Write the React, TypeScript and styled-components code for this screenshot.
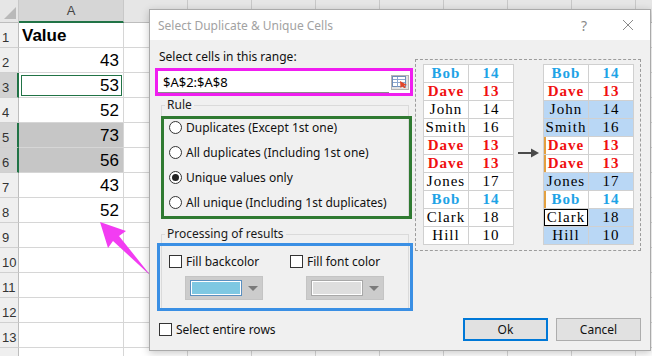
import React from 'react';
import styled, { createGlobalStyle } from 'styled-components';

const GlobalStyle = createGlobalStyle`
  html, body {
    margin: 0;
    padding: 0;
    background: #fff;
  }
  body {
    width: 652px;
    height: 356px;
    overflow: hidden;
    position: relative;
    font-family: "Liberation Sans", Arial, sans-serif;
  }
`;

const VALUES: (string | number)[] = ['Value', 43, 53, 52, 73, 56, 43, 52];
const SELECTED_ROWS = [3, 5, 6];
const GRAY_ROWS = [5, 6];
const EXTRA_COLS = 9;
const ROW_COUNT = 14;
const LABELED_ROWS = 13;

type Person = { name: string; age: string; tone?: 'blue' | 'red' };

const PEOPLE: Person[] = [
  { name: 'Bob', age: '14', tone: 'blue' },
  { name: 'Dave', age: '13', tone: 'red' },
  { name: 'John', age: '14' },
  { name: 'Smith', age: '16' },
  { name: 'Dave', age: '13', tone: 'red' },
  { name: 'Dave', age: '13', tone: 'red' },
  { name: 'Jones', age: '17' },
  { name: 'Bob', age: '14', tone: 'blue' },
  { name: 'Clark', age: '18' },
  { name: 'Hill', age: '10' },
];

// rows picked out in the "after" table
const PICKED = [2, 3, 6, 8, 9];
const MARKED = [4, 5, 7];

export default function App() {
  return (
    <>
      <GlobalStyle />
      <Sheet>
        <Corner>
          <svg width="12" height="12" viewBox="0 0 12 12">
            <polygon points="12,0 12,12 0,12" fill="#b9b9b9" />
          </svg>
        </Corner>
        <ColHead $selected>A</ColHead>
        {Array.from({ length: EXTRA_COLS }).map((_, i) => (
          <ColHead key={i} />
        ))}
        {Array.from({ length: ROW_COUNT }).map((_, r) => {
          const row = r + 1;
          const value = VALUES[r];
          return (
            <React.Fragment key={row}>
              <RowHead $selected={SELECTED_ROWS.includes(row)}>
                {row <= LABELED_ROWS ? row : ''}
              </RowHead>
              <Cell
                $bold={row === 1}
                $gray={GRAY_ROWS.includes(row)}
                $active={row === 3}
              >
                {value}
              </Cell>
              {Array.from({ length: EXTRA_COLS }).map((_, c) => (
                <Cell key={c} />
              ))}
            </React.Fragment>
          );
        })}
      </Sheet>

      <Pointer width="160" height="290" viewBox="0 0 160 290">
        <polygon
          points="100,222 126,231 119,236 151,276 113,241 108,248"
          fill="#f23cf2"
        />
      </Pointer>

      <Dialog>
        <TitleBar>
          <Title>Select Duplicate &amp; Unique Cells</Title>
          <TitleButton>?</TitleButton>
          <TitleButton>
            <svg width="12" height="12" viewBox="0 0 12 12">
              <path d="M1 1L11 11M11 1L1 11" stroke="#8a8a8a" strokeWidth="1" />
            </svg>
          </TitleButton>
        </TitleBar>

        <Body>
          <Main>
            <LeftCol>
              <FieldLabel>Select cells in this range:</FieldLabel>
              <RangeBox>
                <RangeInput>$A$2:$A$8</RangeInput>
                <PickButton>
                  <svg width="16" height="12" viewBox="0 0 16 12">
                    <rect x="0.5" y="0.5" width="13" height="10" fill="#fff" stroke="#6f8db8" />
                    <path d="M1 3.5H13M1 6.5H13M5.5 1V10.5" stroke="#8ca8cf" />
                    <path d="M8 5L15 9L12 9.8L14 12H12L10.5 10.5L8.5 12Z" fill="#e2452a" />
                  </svg>
                </PickButton>
              </RangeBox>

              <Group $mt={1}>
                <Legend>Rule</Legend>
                <Highlight $color="#2f7a31" $mt={3} $ml={-1} $w={251}>
                  <RadioList>
                    <Option>
                      <Radio />
                      Duplicates (Except 1st one)
                    </Option>
                    <Option>
                      <Radio />
                      All duplicates (Including 1st one)
                    </Option>
                    <Option>
                      <Radio $checked />
                      Unique values only
                    </Option>
                    <Option>
                      <Radio />
                      All unique (Including 1st duplicates)
                    </Option>
                  </RadioList>
                </Highlight>
              </Group>

              <Group $mt={7}>
                <Legend>Processing of results</Legend>
                <Highlight $color="#3a8fe4" $mt={1} $ml={-5} $w={256}>
                  <ResultGrid>
                    <Choice>
                      <Option>
                        <Check />
                        Fill backcolor
                      </Option>
                      <Picker>
                        <Swatch $color="#7ec8e2" $edge="#5a8fc0" />
                        <Caret />
                      </Picker>
                    </Choice>
                    <Choice>
                      <Option>
                        <Check />
                        Fill font color
                      </Option>
                      <Picker>
                        <Swatch $color="#dedede" $edge="#a8a8a8" />
                        <Caret />
                      </Picker>
                    </Choice>
                  </ResultGrid>
                </Highlight>
              </Group>
            </LeftCol>

            <Preview>
              <MiniTable>
                {PEOPLE.map((p, i) => (
                  <React.Fragment key={i}>
                    <MiniCell $tone={p.tone}>{p.name}</MiniCell>
                    <MiniCell $tone={p.tone}>{p.age}</MiniCell>
                  </React.Fragment>
                ))}
              </MiniTable>
              <ArrowSlot>
                <svg width="22" height="10" viewBox="0 0 22 10">
                  <path d="M0 5H15" stroke="#4a4a4a" strokeWidth="2" />
                  <polygon points="13,0.5 21,5 13,9.5" fill="#4a4a4a" />
                </svg>
              </ArrowSlot>
              <MiniTable>
                {PEOPLE.map((p, i) => (
                  <React.Fragment key={i}>
                    <MiniCell
                      $tone={p.tone}
                      $picked={PICKED.includes(i) && i !== 8}
                      $marked={MARKED.includes(i)}
                      $boxed={i === 8}
                    >
                      {p.name}
                    </MiniCell>
                    <MiniCell $tone={p.tone} $picked={PICKED.includes(i)}>
                      {p.age}
                    </MiniCell>
                  </React.Fragment>
                ))}
              </MiniTable>
            </Preview>
          </Main>

          <Footer>
            <Option>
              <Check />
              Select entire rows
            </Option>
            <Buttons>
              <Button $primary>Ok</Button>
              <Button>Cancel</Button>
            </Buttons>
          </Footer>
        </Body>
      </Dialog>
    </>
  );
}

/* ---------- spreadsheet behind the dialog ---------- */

const Sheet = styled.div`
  display: grid;
  grid-template-columns: 19px 105px repeat(${EXTRA_COLS}, 64px);
  grid-template-rows: 23px repeat(${ROW_COUNT}, 25px);
  width: 652px;
  height: 356px;
  overflow: hidden;
`;

const Corner = styled.div`
  background: #e6e6e6;
  border-right: 1px solid #c8c8c8;
  border-bottom: 1px solid #bdbdbd;
  box-sizing: border-box;
  display: flex;
  align-items: flex-end;
  justify-content: flex-end;
  padding: 0 2px 3px 0;
`;

const ColHead = styled.div<{ $selected?: boolean }>`
  box-sizing: border-box;
  background: ${(p) => (p.$selected ? '#d6d6d6' : '#e6e6e6')};
  border-right: 1px solid #c8c8c8;
  border-bottom: ${(p) => (p.$selected ? '2px solid #217346' : '1px solid #bdbdbd')};
  color: #444;
  font-size: 13px;
  display: flex;
  align-items: center;
  justify-content: center;
`;

const RowHead = styled.div<{ $selected?: boolean }>`
  box-sizing: border-box;
  background: ${(p) => (p.$selected ? '#d2d2d2' : '#efefef')};
  border-bottom: 1px solid #d0d0d0;
  border-right: ${(p) => (p.$selected ? '2px solid #217346' : '1px solid #bdbdbd')};
  color: #333;
  font-size: 13px;
  padding: 4px 0 0 2px;
  display: flex;
  align-items: center;
`;

const Cell = styled.div<{ $bold?: boolean; $gray?: boolean; $active?: boolean }>`
  box-sizing: border-box;
  border-right: 1px solid #d6d6d6;
  border-bottom: 1px solid #d6d6d6;
  background: ${(p) => (p.$gray ? '#c6c6c6' : '#fff')};
  color: #000;
  font-size: 17px;
  font-weight: ${(p) => (p.$bold ? 700 : 400)};
  display: flex;
  align-items: center;
  justify-content: ${(p) => (p.$bold ? 'flex-start' : 'flex-end')};
  padding: 2px 4px 0 3px;
  outline: ${(p) => (p.$active ? '1px solid #217346' : 'none')};
  outline-offset: -3px;
`;

const Pointer = styled.svg`
  position: absolute;
  left: 0;
  top: 0;
`;

/* ---------- dialog ---------- */

const Dialog = styled.div`
  position: absolute;
  left: 149px;
  top: 9px;
  width: 502px;
  height: 342px;
  box-sizing: border-box;
  border: 1px solid #aaaaaa;
  background: #f0f0f0;
  box-shadow: 0 2px 8px rgba(0, 0, 0, 0.22);
  display: flex;
  flex-direction: column;
  font-family: "Noto Sans", "Open Sans", sans-serif;
  font-size: 12px;
  color: #111;
`;

const TitleBar = styled.div`
  height: 30px;
  background: #fff;
  display: flex;
  align-items: center;
  padding-left: 8px;
`;

const Title = styled.div`
  flex: 1;
  color: #a2a2a2;
  font-size: 12px;
`;

const TitleButton = styled.div`
  width: 44px;
  height: 30px;
  display: flex;
  align-items: center;
  justify-content: center;
  color: #8a8a8a;
  font-size: 14px;
`;

const Body = styled.div`
  flex: 1;
  display: flex;
  flex-direction: column;
  padding: 9px 8px 8px 5px;
`;

const Main = styled.div`
  display: grid;
  grid-template-columns: 258px 226px;
  column-gap: 2px;
  align-items: start;
`;

const LeftCol = styled.div`
  display: flex;
  flex-direction: column;
`;

const FieldLabel = styled.div`
  line-height: 16px;
  padding-left: 4px;
`;

const RangeBox = styled.div`
  margin-top: 3px;
  height: 28px;
  box-sizing: border-box;
  border: 3px solid #f01df0;
  background: #fff;
  display: flex;
  align-items: center;
  padding-right: 1px;
`;

const RangeInput = styled.div`
  flex: 1;
  align-self: stretch;
  display: flex;
  align-items: center;
  padding-left: 5px;
  font-size: 13px;
  color: #000;
  border-bottom: 1px solid #8a8a8a;
`;

const PickButton = styled.div`
  width: 18px;
  height: 15px;
  margin-left: 2px;
  box-sizing: border-box;
  background: #e3e3e3;
  border: 1px solid #b4b4b4;
  display: flex;
  align-items: center;
  justify-content: center;
`;

const Group = styled.fieldset<{ $mt: number }>`
  margin: ${(p) => p.$mt}px 0 0 6px;
  width: 248px;
  box-sizing: border-box;
  border: 1px solid #dadada;
  padding: 0;
  min-width: 0;
`;

const Legend = styled.legend`
  margin-left: 3px;
  padding: 0 2px;
  line-height: 16px;
  font-size: 12px;
  color: #1a1a1a;
`;

const Highlight = styled.div<{ $color: string; $mt: number; $ml: number; $w: number }>`
  box-sizing: border-box;
  width: ${(p) => p.$w}px;
  margin: ${(p) => p.$mt}px 0 -1px ${(p) => p.$ml}px;
  border: 3px solid ${(p) => p.$color};
`;

const RadioList = styled.div`
  display: flex;
  flex-direction: column;
  gap: 8px;
  padding: 0 0 5px 5px;
`;

const Option = styled.div`
  display: flex;
  align-items: center;
  gap: 4px;
  height: 17px;
  white-space: nowrap;
`;

const Radio = styled.span<{ $checked?: boolean }>`
  width: 13px;
  height: 13px;
  box-sizing: border-box;
  border-radius: 50%;
  border: 1px solid #333;
  background: #fff;
  display: flex;
  align-items: center;
  justify-content: center;

  &::after {
    content: '';
    width: 7px;
    height: 7px;
    border-radius: 50%;
    background: ${(p) => (p.$checked ? '#222' : 'transparent')};
  }
`;

const Check = styled.span`
  width: 13px;
  height: 13px;
  box-sizing: border-box;
  border: 1px solid #333;
  background: #fff;
`;

const ResultGrid = styled.div`
  display: grid;
  grid-template-columns: 121px 1fr;
  padding: 7px 0 8px 9px;
`;

const Choice = styled.div`
  display: flex;
  flex-direction: column;
  gap: 6px;
`;

const Picker = styled.div`
  margin-left: 16px;
  width: 78px;
  height: 24px;
  box-sizing: border-box;
  background: #cccccc;
  border: 1px solid #c4c4c4;
  display: flex;
  align-items: center;
  padding: 0 4px;
  gap: 6px;
`;

const Swatch = styled.span<{ $color: string; $edge: string }>`
  width: 54px;
  height: 16px;
  box-sizing: border-box;
  background: ${(p) => p.$color};
  border: 1px solid ${(p) => p.$edge};
  box-shadow: inset 0 0 0 1px #fff;
`;

const Caret = styled.span`
  width: 0;
  height: 0;
  border-left: 5px solid transparent;
  border-right: 5px solid transparent;
  border-top: 5px solid #7a7a7a;
`;

const Preview = styled.div`
  margin-top: 10px;
  height: 192px;
  box-sizing: border-box;
  border: 1px dashed #9c9c9c;
  padding: 4px 0 0 7px;
  display: flex;
  align-items: flex-start;
`;

const MiniTable = styled.div`
  display: grid;
  grid-template-columns: 45px 45px;
  grid-auto-rows: 18px;
  border-top: 1px solid #d0d0d0;
  border-left: 1px solid #d0d0d0;
  background: #fff;
`;

const toneColor = { blue: '#1ea3e6', red: '#f01010' };

const MiniCell = styled.div<{
  $tone?: 'blue' | 'red';
  $picked?: boolean;
  $marked?: boolean;
  $boxed?: boolean;
}>`
  box-sizing: border-box;
  border-right: 1px solid #d0d0d0;
  border-bottom: 1px solid #d0d0d0;
  background: ${(p) => (p.$picked ? '#b9d7f5' : '#fff')};
  color: ${(p) => (p.$tone ? toneColor[p.$tone] : '#000')};
  font-family: "Liberation Serif", "Times New Roman", serif;
  font-size: 15px;
  letter-spacing: 1px;
  font-weight: ${(p) => (p.$tone ? 700 : 400)};
  display: flex;
  align-items: center;
  justify-content: center;
  box-shadow: ${(p) =>
    p.$boxed ? 'inset 0 0 0 1px #000' : p.$marked ? 'inset 2px 0 0 #e3a040' : 'none'};
`;

const ArrowSlot = styled.div`
  width: 29px;
  align-self: stretch;
  display: flex;
  align-items: center;
  justify-content: center;
  padding-bottom: 8px;
`;

const Footer = styled.div`
  margin-top: 7px;
  height: 23px;
  display: flex;
  align-items: center;
  justify-content: space-between;
  padding: 0 1px 0 4px;
`;

const Buttons = styled.div`
  display: flex;
  gap: 8px;
`;

const Button = styled.div<{ $primary?: boolean }>`
  width: 85px;
  height: 23px;
  box-sizing: border-box;
  background: #e1e1e1;
  border: ${(p) => (p.$primary ? '2px solid #0078d7' : '1px solid #adadad')};
  display: flex;
  align-items: center;
  justify-content: center;
  font-size: 12px;
  color: #111;
`;
